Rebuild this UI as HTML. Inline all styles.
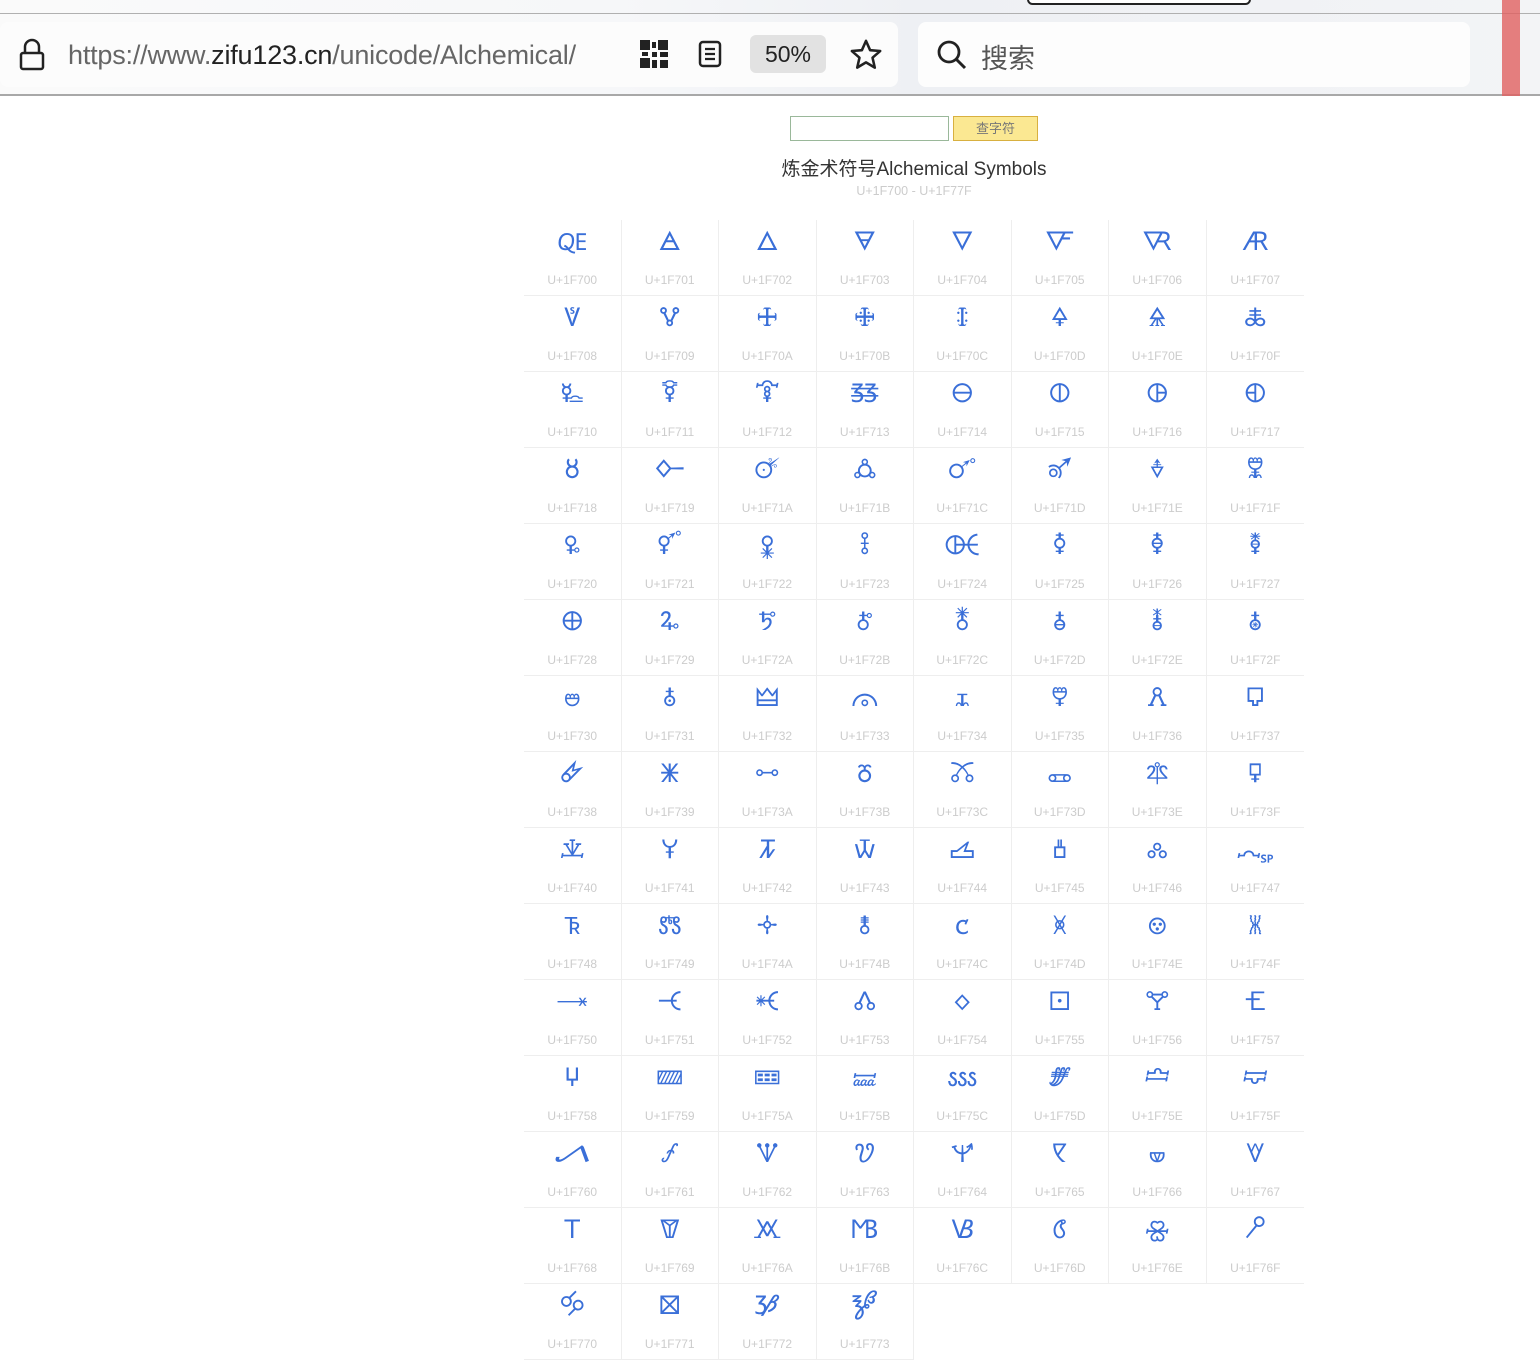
<!DOCTYPE html>
<html><head><meta charset="utf-8">
<style>
*{margin:0;padding:0;box-sizing:border-box}
body{width:1540px;height:1366px;background:#fff;font-family:"Liberation Sans","Noto Sans CJK SC",sans-serif;position:relative;overflow:hidden}
.bar{position:absolute;left:0;top:0;width:1540px;height:96px;background:linear-gradient(90deg,#fafafa 0%,#f6f7f9 40%,#eef0f4 60%,#f3f4f6 100%);border-bottom:2px solid #a8a8a8}
.topline{position:absolute;left:0;top:13px;width:1540px;height:1px;background:#b0b0b0}
.pill{position:absolute;left:1027px;top:-6px;width:224px;height:11px;border:2px solid #222;border-radius:6px;background:#fff}
.red{position:absolute;left:1502px;top:0;width:18px;height:96px;background:#e06060;opacity:.8}
.urlbox{position:absolute;left:0;top:22px;width:898px;height:65px;background:#fcfcfc;border-radius:8px}
.search{position:absolute;left:918px;top:22px;width:552px;height:65px;background:#fdfdfd;border-radius:8px}
.url{position:absolute;left:68px;top:40px;font-size:27px;color:#666;white-space:nowrap;letter-spacing:-.2px}
.url b{font-weight:normal;color:#222}
.zoomb{position:absolute;left:750px;top:35px;width:76px;height:38px;background:#e2e2e2;border-radius:6px;font-size:23px;text-align:center;line-height:38px;color:#222}
.st{position:absolute;left:981px;top:37px;font-size:27px;color:#555}
.inp{position:absolute;left:790px;top:116px;width:159px;height:25px;border:1px solid #9ab89a;background:#fff}
.btn{position:absolute;left:953px;top:116px;width:85px;height:25px;border:1px solid #d8b040;background:#fbe892;font-size:13px;color:#777;text-align:center;line-height:23px}
.title{position:absolute;left:0;width:1828px;top:154px;text-align:center;font-size:19px;color:#333}
.sub{position:absolute;left:0;width:1828px;top:184px;text-align:center;font-size:12.5px;color:#ccc}
.grid{position:absolute;left:524px;top:220px;width:780px;display:grid;grid-template-columns:repeat(8,97.5px)}
.grid div{height:76px;border-bottom:1px solid #eee;border-right:1px solid #eee;text-align:center;position:relative}
.grid div:nth-child(8n){border-right:none}
.grid b{display:block;position:absolute;left:0;right:0;top:7px;font-weight:normal;font-size:26px;line-height:30px;color:#3a6fd8;font-family:"DejaVu Sans","Noto Sans CJK SC",sans-serif}
.grid i{display:block;position:absolute;left:0;right:0;top:53px;font-style:normal;font-size:12px;color:#ccc}
</style></head><body>
<div class="bar"></div><div class="topline"></div><div class="pill"></div><div class="red"></div>
<div class="urlbox"></div><div class="search"></div>
<svg style="position:absolute;left:18px;top:38px" width="28" height="34" viewBox="0 0 28 34"><path d="M7 15V9a7 7 0 0 1 14 0v6" fill="none" stroke="#222" stroke-width="2.5"/><rect x="3" y="15" width="22" height="16" rx="2" fill="none" stroke="#222" stroke-width="2.5"/></svg>
<div class="url">https://www.<b>zifu123.cn</b>/unicode/Alchemical/</div>
<svg style="position:absolute;left:640px;top:40px" width="28" height="28" viewBox="0 0 28 28" fill="#222"><rect x="0" y="0" width="10" height="10"/><rect x="18" y="0" width="10" height="10"/><rect x="0" y="18" width="10" height="10"/><rect x="12" y="12" width="5" height="5"/><rect x="20" y="20" width="8" height="8"/><rect x="12" y="2" width="4" height="6"/><rect x="2" y="12" width="6" height="4"/><rect x="12" y="20" width="5" height="8"/><rect x="20" y="12" width="8" height="5"/></svg>
<svg style="position:absolute;left:698px;top:40px" width="24" height="28" viewBox="0 0 24 28"><rect x="2" y="2" width="20" height="24" rx="3" fill="none" stroke="#222" stroke-width="2.5"/><path d="M7 9h10M7 14h10M7 19h10" stroke="#222" stroke-width="2.2"/></svg>
<div class="zoomb">50%</div>
<svg style="position:absolute;left:849px;top:38px" width="34" height="34" viewBox="0 0 24 24"><path d="M12 2l2.9 6.6 7.1.6-5.4 4.7 1.6 7-6.2-3.7-6.2 3.7 1.6-7L2 9.2l7.1-.6z" fill="none" stroke="#222" stroke-width="1.8" stroke-linejoin="round"/></svg>
<svg style="position:absolute;left:936px;top:39px" width="32" height="32" viewBox="0 0 32 32"><circle cx="13" cy="13" r="10" fill="none" stroke="#222" stroke-width="2.8"/><path d="M20.5 20.5L29 29" stroke="#222" stroke-width="3"/></svg>
<div class="st">搜索</div>
<div class="inp"></div><div class="btn">查字符</div>
<div class="title">炼金术符号Alchemical Symbols</div>
<div class="sub">U+1F700 - U+1F77F</div>
<div class="grid">
<div><b>&#x1F700;</b><i>U+1F700</i></div><div><b>&#x1F701;</b><i>U+1F701</i></div><div><b>&#x1F702;</b><i>U+1F702</i></div><div><b>&#x1F703;</b><i>U+1F703</i></div><div><b>&#x1F704;</b><i>U+1F704</i></div><div><b>&#x1F705;</b><i>U+1F705</i></div><div><b>&#x1F706;</b><i>U+1F706</i></div><div><b>&#x1F707;</b><i>U+1F707</i></div>
<div><b>&#x1F708;</b><i>U+1F708</i></div><div><b>&#x1F709;</b><i>U+1F709</i></div><div><b>&#x1F70A;</b><i>U+1F70A</i></div><div><b>&#x1F70B;</b><i>U+1F70B</i></div><div><b>&#x1F70C;</b><i>U+1F70C</i></div><div><b>&#x1F70D;</b><i>U+1F70D</i></div><div><b>&#x1F70E;</b><i>U+1F70E</i></div><div><b>&#x1F70F;</b><i>U+1F70F</i></div>
<div><b>&#x1F710;</b><i>U+1F710</i></div><div><b>&#x1F711;</b><i>U+1F711</i></div><div><b>&#x1F712;</b><i>U+1F712</i></div><div><b>&#x1F713;</b><i>U+1F713</i></div><div><b>&#x1F714;</b><i>U+1F714</i></div><div><b>&#x1F715;</b><i>U+1F715</i></div><div><b>&#x1F716;</b><i>U+1F716</i></div><div><b>&#x1F717;</b><i>U+1F717</i></div>
<div><b>&#x1F718;</b><i>U+1F718</i></div><div><b>&#x1F719;</b><i>U+1F719</i></div><div><b>&#x1F71A;</b><i>U+1F71A</i></div><div><b>&#x1F71B;</b><i>U+1F71B</i></div><div><b>&#x1F71C;</b><i>U+1F71C</i></div><div><b>&#x1F71D;</b><i>U+1F71D</i></div><div><b>&#x1F71E;</b><i>U+1F71E</i></div><div><b>&#x1F71F;</b><i>U+1F71F</i></div>
<div><b>&#x1F720;</b><i>U+1F720</i></div><div><b>&#x1F721;</b><i>U+1F721</i></div><div><b>&#x1F722;</b><i>U+1F722</i></div><div><b>&#x1F723;</b><i>U+1F723</i></div><div><b>&#x1F724;</b><i>U+1F724</i></div><div><b>&#x1F725;</b><i>U+1F725</i></div><div><b>&#x1F726;</b><i>U+1F726</i></div><div><b>&#x1F727;</b><i>U+1F727</i></div>
<div><b>&#x1F728;</b><i>U+1F728</i></div><div><b>&#x1F729;</b><i>U+1F729</i></div><div><b>&#x1F72A;</b><i>U+1F72A</i></div><div><b>&#x1F72B;</b><i>U+1F72B</i></div><div><b>&#x1F72C;</b><i>U+1F72C</i></div><div><b>&#x1F72D;</b><i>U+1F72D</i></div><div><b>&#x1F72E;</b><i>U+1F72E</i></div><div><b>&#x1F72F;</b><i>U+1F72F</i></div>
<div><b>&#x1F730;</b><i>U+1F730</i></div><div><b>&#x1F731;</b><i>U+1F731</i></div><div><b>&#x1F732;</b><i>U+1F732</i></div><div><b>&#x1F733;</b><i>U+1F733</i></div><div><b>&#x1F734;</b><i>U+1F734</i></div><div><b>&#x1F735;</b><i>U+1F735</i></div><div><b>&#x1F736;</b><i>U+1F736</i></div><div><b>&#x1F737;</b><i>U+1F737</i></div>
<div><b>&#x1F738;</b><i>U+1F738</i></div><div><b>&#x1F739;</b><i>U+1F739</i></div><div><b>&#x1F73A;</b><i>U+1F73A</i></div><div><b>&#x1F73B;</b><i>U+1F73B</i></div><div><b>&#x1F73C;</b><i>U+1F73C</i></div><div><b>&#x1F73D;</b><i>U+1F73D</i></div><div><b>&#x1F73E;</b><i>U+1F73E</i></div><div><b>&#x1F73F;</b><i>U+1F73F</i></div>
<div><b>&#x1F740;</b><i>U+1F740</i></div><div><b>&#x1F741;</b><i>U+1F741</i></div><div><b>&#x1F742;</b><i>U+1F742</i></div><div><b>&#x1F743;</b><i>U+1F743</i></div><div><b>&#x1F744;</b><i>U+1F744</i></div><div><b>&#x1F745;</b><i>U+1F745</i></div><div><b>&#x1F746;</b><i>U+1F746</i></div><div><b>&#x1F747;</b><i>U+1F747</i></div>
<div><b>&#x1F748;</b><i>U+1F748</i></div><div><b>&#x1F749;</b><i>U+1F749</i></div><div><b>&#x1F74A;</b><i>U+1F74A</i></div><div><b>&#x1F74B;</b><i>U+1F74B</i></div><div><b>&#x1F74C;</b><i>U+1F74C</i></div><div><b>&#x1F74D;</b><i>U+1F74D</i></div><div><b>&#x1F74E;</b><i>U+1F74E</i></div><div><b>&#x1F74F;</b><i>U+1F74F</i></div>
<div><b>&#x1F750;</b><i>U+1F750</i></div><div><b>&#x1F751;</b><i>U+1F751</i></div><div><b>&#x1F752;</b><i>U+1F752</i></div><div><b>&#x1F753;</b><i>U+1F753</i></div><div><b>&#x1F754;</b><i>U+1F754</i></div><div><b>&#x1F755;</b><i>U+1F755</i></div><div><b>&#x1F756;</b><i>U+1F756</i></div><div><b>&#x1F757;</b><i>U+1F757</i></div>
<div><b>&#x1F758;</b><i>U+1F758</i></div><div><b>&#x1F759;</b><i>U+1F759</i></div><div><b>&#x1F75A;</b><i>U+1F75A</i></div><div><b>&#x1F75B;</b><i>U+1F75B</i></div><div><b>&#x1F75C;</b><i>U+1F75C</i></div><div><b>&#x1F75D;</b><i>U+1F75D</i></div><div><b>&#x1F75E;</b><i>U+1F75E</i></div><div><b>&#x1F75F;</b><i>U+1F75F</i></div>
<div><b>&#x1F760;</b><i>U+1F760</i></div><div><b>&#x1F761;</b><i>U+1F761</i></div><div><b>&#x1F762;</b><i>U+1F762</i></div><div><b>&#x1F763;</b><i>U+1F763</i></div><div><b>&#x1F764;</b><i>U+1F764</i></div><div><b>&#x1F765;</b><i>U+1F765</i></div><div><b>&#x1F766;</b><i>U+1F766</i></div><div><b>&#x1F767;</b><i>U+1F767</i></div>
<div><b>&#x1F768;</b><i>U+1F768</i></div><div><b>&#x1F769;</b><i>U+1F769</i></div><div><b>&#x1F76A;</b><i>U+1F76A</i></div><div><b>&#x1F76B;</b><i>U+1F76B</i></div><div><b>&#x1F76C;</b><i>U+1F76C</i></div><div><b>&#x1F76D;</b><i>U+1F76D</i></div><div><b>&#x1F76E;</b><i>U+1F76E</i></div><div><b>&#x1F76F;</b><i>U+1F76F</i></div>
<div><b>&#x1F770;</b><i>U+1F770</i></div><div><b>&#x1F771;</b><i>U+1F771</i></div><div><b>&#x1F772;</b><i>U+1F772</i></div><div style="border-right:1px solid #eee"><b>&#x1F773;</b><i>U+1F773</i></div>
</div>
</body></html>
